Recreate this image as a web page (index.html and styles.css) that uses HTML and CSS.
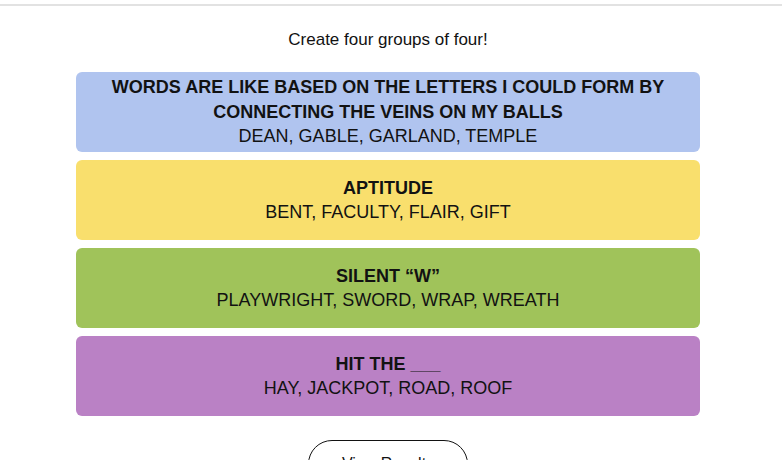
FILE: index.html
```html
<!DOCTYPE html>
<html lang="en">
<head>
<meta charset="utf-8">
<title>Connections</title>
<link rel="stylesheet" href="styles.css">
</head>
<body>
<div class="topbar"></div>
<main class="board">
  <p class="prompt">Create four groups of four!</p>
  <section class="groups">
    <div class="group blue">
      <h3 class="title">WORDS ARE LIKE BASED ON THE LETTERS I COULD FORM BY CONNECTING THE VEINS ON MY BALLS</h3>
      <p class="words">DEAN, GABLE, GARLAND, TEMPLE</p>
    </div>
    <div class="group yellow">
      <h3 class="title">APTITUDE</h3>
      <p class="words">BENT, FACULTY, FLAIR, GIFT</p>
    </div>
    <div class="group green">
      <h3 class="title">SILENT “W”</h3>
      <p class="words">PLAYWRIGHT, SWORD, WRAP, WREATH</p>
    </div>
    <div class="group purple">
      <h3 class="title">HIT THE ___</h3>
      <p class="words">HAY, JACKPOT, ROAD, ROOF</p>
    </div>
  </section>
  <div class="actions">
    <button class="results">View Results</button>
  </div>
</main>
</body>
</html>
```
FILE: styles.css
```css
html, body {
  margin: 0;
  padding: 0;
  background: #ffffff;
  color: #121212;
  font-family: "Liberation Sans", Arial, sans-serif;
}
body {
  padding-right: 6px;
}
.topbar {
  height: 4px;
  border-bottom: 2px solid #e2e2e2;
  margin-right: -6px;
}
.board {
  width: 624px;
  margin: 0 auto;
}
.prompt {
  margin: 0;
  padding-top: 23px;
  text-align: center;
  font-size: 17px;
  line-height: 21px;
  height: 43px;
}
.groups {
  display: flex;
  flex-direction: column;
  gap: 8px;
}
.group {
  height: 80px;
  border-radius: 6px;
  display: flex;
  flex-direction: column;
  align-items: center;
  justify-content: center;
  text-align: center;
  padding: 0 30px;
  box-sizing: border-box;
}
.blue { background: #b0c4ef; }
.yellow { background: #f9df6d; }
.green { background: #a0c35a; }
.purple { background: #ba81c5; }
.title {
  margin: 0;
  font-size: 18px;
  font-weight: 700;
  line-height: 24.5px;
}
.words {
  margin: 0;
  font-size: 18px;
  line-height: 24.5px;
}
.actions {
  display: flex;
  justify-content: center;
  padding-top: 24px;
}
.results {
  width: 160px;
  height: 48px;
  border: 1px solid #121212;
  border-radius: 24px;
  background: #fff;
  color: #121212;
  font-family: inherit;
  font-size: 16px;
  font-weight: 400;
}
```
